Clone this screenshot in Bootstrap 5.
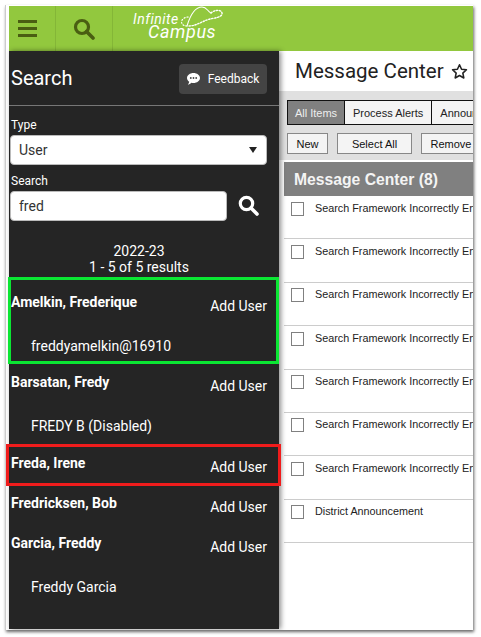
<!DOCTYPE html>
<html lang="en">
<head>
<meta charset="utf-8">
<title>Message Center</title>
<link href="https://cdn.jsdelivr.net/npm/bootstrap@5.3.0/dist/css/bootstrap.min.css" rel="stylesheet">
<style>
html,body{height:100%;background:#fff;overflow:hidden}
body{font-family:Roboto,sans-serif;color:#fff}
.ic-frame{width:468px;height:625px;margin:5px 0 0 5px;border:1px solid #ccc;border-width:0 0 0 1px;padding:1px 0 0 3px;box-shadow:1px 2px 3px rgba(0,0,0,.6);background:#fff;overflow:hidden}
.ic-head{height:45px;background:#92c83e}
.ic-cell{height:45px;border-right:1px solid #84b637}
.ic-cell-a{width:47px;padding-left:9px}
.ic-cell-b{width:57px}
.ic-logo{margin-left:20px;width:92px;height:45px;position:relative;color:#fff;font-style:italic;font-weight:400}
.ic-logo-a{position:absolute;left:0;top:8px;font-size:14px;letter-spacing:.5px;line-height:10px}
.ic-logo-b{position:absolute;left:15px;top:19px;font-size:18px;letter-spacing:.6px;line-height:13px}
.ic-logo svg{position:absolute;left:47px;top:0}
.ic-main{height:578px}
.ic-side{width:270px;flex:none;background:#252525;position:relative;z-index:2;box-shadow:2px 0 5px rgba(0,0,0,.45)}
.ic-top{height:55px;border-bottom:1px solid #777;padding:12px 12px 0 2px}
.ic-h{font-size:20px;line-height:30px;font-weight:400;margin:0}
.ic-fb{background:#444;color:#fff;font-size:12px;height:30px;width:88px;border:0;border-radius:4px;padding:0;margin-top:1px}
.ic-lab{font-size:12px;line-height:16px;padding-left:2px}
.ic-type{padding-top:11px}
.ic-box{background:#fff;color:#333;font-size:14px;height:30px;border:1px solid #bbb;border-radius:4px;line-height:28px;padding:0 8px}
.ic-sel{width:257px;margin:2px 0 0 1px}
.ic-caret{width:0;height:0;border:4px solid transparent;border-top:6px solid #222;border-bottom:0;margin-right:1px}
.ic-sch{padding-top:8px}
.ic-inp{width:217px;margin:2px 0 0 1px}
.ic-glass{margin-left:11px}
.ic-res{font-size:14px;line-height:16px;text-align:center;padding-top:23px;width:260px;height:63px;margin-top:-1px}
.ic-row{padding:0 12px 0 2px;position:relative}
.ic-one{height:40px}
.ic-two{height:81px}
.ic-line{display:flex;justify-content:space-between}
.ic-name{font-size:14px;font-weight:700;line-height:16px;padding-top:11px}
.ic-add{font-size:14px;line-height:16px;padding-top:15px}
.ic-sub{font-size:14px;line-height:16px;padding:24px 0 0 20px}
.ic-green{margin-top:-7px;height:87px;padding-top:7px}
.ic-green::after{content:"";position:absolute;left:-1px;right:0;top:1px;bottom:-1px;border:3px solid #0be633;pointer-events:none}
.ic-red::after{content:"";position:absolute;left:-3px;right:-2px;top:0;bottom:-2px;border:3px solid #f01c1c;pointer-events:none}
.ic-body{flex:1;min-width:0;background:#fff;overflow:hidden;color:#222}
.ic-title{height:40px;display:flex;align-items:center;padding-left:16px;font-size:20.5px;gap:7px;color:#222;white-space:nowrap}
.ic-tools{height:69px;background:#e0e0e0;padding:9px 0 0 8px;overflow:hidden;font-family:"Liberation Sans",Arial,sans-serif}
.ic-tabs{display:flex;height:25px;border:1px solid #111;border-right:0;width:max-content;font-size:11px}
.ic-tab{padding:0 8px;line-height:24px;background:#f4f4f4;border-right:1px solid #111;white-space:nowrap}
.ic-tab-on{background:#808080;color:#eee;width:57px;padding:0;text-align:center}
.ic-btns{display:flex;gap:9px;margin-top:8px;width:max-content;font-size:11px}
.ic-bt{height:21px;line-height:21px;background:#f4f4f4;border:1px solid #888;text-align:center;white-space:nowrap;color:#111}
.ic-bt-a{width:41px}.ic-bt-b{width:75px}.ic-bt-c{width:60px}
.ic-list{margin:2px 0 0 5px;font-family:"Liberation Sans",Arial,sans-serif}
.ic-mc{height:34px;background:#808080;color:#f4f4f4;font-weight:700;font-size:15.7px;line-height:35px;padding-left:10px;white-space:nowrap}
.ic-item{height:43.4px;border-bottom:1px solid #ccc;display:flex;white-space:nowrap;font-size:10.8px;color:#222;padding:5.5px 0 0 7px;overflow:hidden}
.ic-chk{width:13px;height:14px;border:1px solid #808080;background:#fff;flex:none;margin-right:11px}
.ic-txt{line-height:12px}
</style>
</head>
<body>
<div class="ic-frame">
  <div class="ic-head d-flex">
    <div class="ic-cell ic-cell-a d-flex align-items-center">
      <svg width="19" height="18" viewBox="0 0 19 18" fill="#4a5e12"><rect width="19" height="3"/><rect y="7" width="19" height="3"/><rect y="14" width="19" height="3"/></svg>
    </div>
    <div class="ic-cell ic-cell-b d-flex align-items-center justify-content-center">
      <svg width="22" height="22" viewBox="0 0 22 22" fill="none" stroke="#4a5e12"><circle cx="9" cy="9" r="6.5" stroke-width="3.2"/><path d="M13.5 13.5 20 20" stroke-width="3.6" stroke-linecap="round"/></svg>
    </div>
    <div class="ic-logo">
      <span class="ic-logo-a">Infinite</span>
      <span class="ic-logo-b">Campus</span>
      <svg width="44" height="24" viewBox="0 0 44 24" fill="none" stroke="#fff" stroke-width="1.1" stroke-linecap="round"><path stroke-dasharray="1.2 1.8" d="M7 20C2 20 0 16 3 13 5 11 8 11 9 11"/><path d="M7 20C10 10 14 1 22 1 27 1 27 5 31 7"/><path stroke-dasharray="1.4 1.6" stroke-width="1.4" d="M31 7C34 4 41 3 42 7 43 11 35 12 30 13 22 15 17 20 8 20"/></svg>
    </div>
  </div>
  <div class="ic-main d-flex">
    <aside class="ic-side">
      <div class="ic-top d-flex justify-content-between">
        <h1 class="ic-h">Search</h1>
        <button class="ic-fb d-flex align-items-center justify-content-center gap-2" type="button">
          <svg width="13" height="12" viewBox="0 0 13 12" fill="#fff"><path d="M6.5 0C10 0 13 2.200 13 5s-3 5-6.500 5c-.8 0-1.500-.1-2.200-.3C3.500 10.600 2 11.500.8 11.500c.7-.7 1.300-1.800 1.400-2.800C.8 7.800 0 6.500 0 5 0 2.200 3 0 6.500 0z"/><g fill="#444"><circle cx="3.800" cy="5" r=".9"/><circle cx="6.500" cy="5" r=".9"/><circle cx="9.200" cy="5" r=".9"/></g></svg>
          Feedback
        </button>
      </div>
      <div class="ic-type">
        <div class="ic-lab">Type</div>
        <div class="ic-box ic-sel d-flex align-items-center justify-content-between"><span>User</span><span class="ic-caret"></span></div>
      </div>
      <div class="ic-sch">
        <div class="ic-lab">Search</div>
        <div class="d-flex align-items-center">
          <div class="ic-box ic-inp">fred</div>
          <svg class="ic-glass" width="21" height="21" viewBox="0 0 21 21" fill="none" stroke="#fff"><circle cx="8.500" cy="8.500" r="6.200" stroke-width="3.200"/><path d="M13 13 19 19" stroke-width="3.600" stroke-linecap="round"/></svg>
        </div>
      </div>
      <div class="ic-res">2022-23<br>1 - 5 of 5 results</div>
      <div class="ic-row ic-two ic-green">
        <div class="ic-line"><span class="ic-name">Amelkin, Frederique</span><span class="ic-add">Add User</span></div>
        <div class="ic-sub">freddyamelkin@16910</div>
      </div>
      <div class="ic-row ic-two">
        <div class="ic-line"><span class="ic-name">Barsatan, Fredy</span><span class="ic-add">Add User</span></div>
        <div class="ic-sub">FREDY B (Disabled)</div>
      </div>
      <div class="ic-row ic-one ic-red">
        <div class="ic-line"><span class="ic-name">Freda, Irene</span><span class="ic-add">Add User</span></div>
      </div>
      <div class="ic-row ic-one">
        <div class="ic-line"><span class="ic-name">Fredricksen, Bob</span><span class="ic-add">Add User</span></div>
      </div>
      <div class="ic-row ic-two">
        <div class="ic-line"><span class="ic-name">Garcia, Freddy</span><span class="ic-add">Add User</span></div>
        <div class="ic-sub">Freddy Garcia</div>
      </div>
    </aside>
    <main class="ic-body">
      <div class="ic-title">Message Center
        <svg width="17" height="17" viewBox="0 0 24 24" fill="none" stroke="#222" stroke-width="2.200" stroke-linejoin="round"><path d="M12 2.500l2.900 6.300 6.900.8-5.100 4.700 1.400 6.800-6.100-3.400-6.100 3.400 1.400-6.800-5.100-4.700 6.900-.8z"/></svg>
      </div>
      <div class="ic-tools">
        <div class="ic-tabs">
          <div class="ic-tab ic-tab-on">All Items</div>
          <div class="ic-tab">Process Alerts</div>
          <div class="ic-tab">Announcements</div>
        </div>
        <div class="ic-btns">
          <div class="ic-bt ic-bt-a">New</div>
          <div class="ic-bt ic-bt-b">Select All</div>
          <div class="ic-bt ic-bt-c">Remove</div>
        </div>
      </div>
      <div class="ic-list">
        <div class="ic-mc">Message Center (8)</div>
        <div class="ic-item"><span class="ic-chk"></span><span class="ic-txt">Search Framework Incorrectly Entered</span></div>
        <div class="ic-item"><span class="ic-chk"></span><span class="ic-txt">Search Framework Incorrectly Entered</span></div>
        <div class="ic-item"><span class="ic-chk"></span><span class="ic-txt">Search Framework Incorrectly Entered</span></div>
        <div class="ic-item"><span class="ic-chk"></span><span class="ic-txt">Search Framework Incorrectly Entered</span></div>
        <div class="ic-item"><span class="ic-chk"></span><span class="ic-txt">Search Framework Incorrectly Entered</span></div>
        <div class="ic-item"><span class="ic-chk"></span><span class="ic-txt">Search Framework Incorrectly Entered</span></div>
        <div class="ic-item"><span class="ic-chk"></span><span class="ic-txt">Search Framework Incorrectly Entered</span></div>
        <div class="ic-item"><span class="ic-chk"></span><span class="ic-txt">District Announcement</span></div>
      </div>
    </main>
  </div>
</div>
<script src="https://cdn.jsdelivr.net/npm/bootstrap@5.3.0/dist/js/bootstrap.bundle.min.js"></script>
</body>
</html>
